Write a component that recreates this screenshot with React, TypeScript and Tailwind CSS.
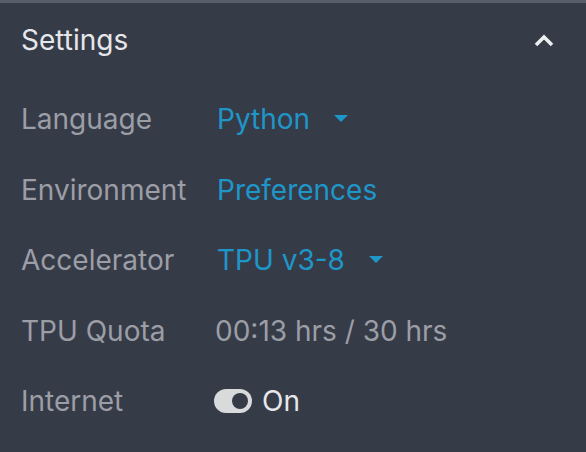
export default function App() {
  const rows = [
    { label: 'Language', kind: 'select', value: 'Python' },
    { label: 'Environment', kind: 'link', value: 'Preferences' },
    { label: 'Accelerator', kind: 'select', value: 'TPU v3-8' },
    { label: 'TPU Quota', kind: 'text', value: '00:13 hrs / 30 hrs' },
    { label: 'Internet', kind: 'toggle', value: 'On' },
  ];

  return (
    <div className="h-[452px] w-[586px] overflow-hidden border-t-[3px] border-[#565d6b] bg-[#363b48] font-['Inter',sans-serif]">
      <div className="flex h-[74px] items-center justify-between pl-[21px] pr-[32px]">
        <h2 className="text-[28px] text-[#e6e7ea]">Settings</h2>
        <svg width="20" height="14" viewBox="0 0 20 14" fill="none">
          <path d="M2 12 L10 4 L18 12" stroke="#eceef0" strokeWidth="3.6" />
        </svg>
      </div>
      <div className="flex flex-col pt-[7px]">
        {rows.map((r) => (
          <div key={r.label} className="flex h-[70.5px] items-center pl-[21px]">
            <span className="w-[196px] text-[28px] text-[#9c9ea6]">{r.label}</span>
            {r.kind === 'select' && (
              <span className="flex items-center gap-[24px] text-[28px] text-[#1f96c8]">
                {r.value}
                <svg width="14" height="8" viewBox="0 0 14 8">
                  <path d="M0 0 H14 L7 7 Z" fill="#1f96c8" />
                </svg>
              </span>
            )}
            {r.kind === 'link' && <span className="text-[28px] text-[#1f96c8]">{r.value}</span>}
            {r.kind === 'text' && <span className="-ml-[2px] text-[28px] text-[#9c9ea6]">{r.value}</span>}
            {r.kind === 'toggle' && (
              <span className="-ml-[3px] flex items-center gap-[10px]">
                <span className="flex h-[24px] w-[38px] items-center justify-end rounded-full bg-[#d9dadc] pr-[4px]">
                  <span className="block h-[16px] w-[16px] shrink-0 rounded-full bg-[#363b48]" />
                </span>
                <span className="text-[28px] text-[#e6e7ea]">{r.value}</span>
              </span>
            )}
          </div>
        ))}
      </div>
    </div>
  );
}
